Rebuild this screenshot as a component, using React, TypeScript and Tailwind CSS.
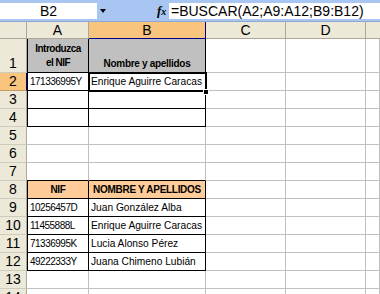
import React from 'react';

type CellProps = {
  w: string;
  text?: string;
  bg?: string;
  bold?: boolean;
  center?: boolean;
  narrow?: boolean;
  right?: 'black' | 'gray';
  bottom?: 'black' | 'gray';
  children?: React.ReactNode;
};

const Cell: React.FC<CellProps> = ({ w, text, bg, bold, center, narrow, right = 'gray', bottom = 'gray', children }) => (
  <div
    className={[
      w,
      'h-full box-border flex items-end pb-[2px] px-[2px] overflow-hidden whitespace-nowrap leading-[13px] text-black',
      right === 'black' ? 'border-r border-r-black' : 'border-r border-r-[#c0c0c0]',
      bottom === 'black' ? 'border-b border-b-black' : 'border-b border-b-[#c0c0c0]',
      bg ?? 'bg-white',
      bold ? 'font-bold text-[10px] tracking-[-0.3px]' : narrow ? 'text-[10px] tracking-[-0.5px]' : 'text-[10.2px]',
      center ? 'justify-center text-center' : '',
    ].join(' ')}
  >
    {children ?? text}
  </div>
);

const RowHead: React.FC<{ n: number; active?: boolean }> = ({ n, active }) => (
  <div
    className={[
      'w-[27px] h-full box-border flex items-end justify-center pb-[1px] text-[14px] leading-[16px] border-r border-b',
      active ? 'bg-[#f8c47e] border-r-[#000080] border-b-[#c49a5c]' : 'bg-[#ece9d8] border-r-[#aca899] border-b-[#cfccbd]',
    ].join(' ')}
  >
    {n}
  </div>
);

const Row: React.FC<{ h: string; children: React.ReactNode }> = ({ h, children }) => (
  <div className={`flex ${h}`}>{children}</div>
);

const data = [
  ['10256457D', 'Juan González Alba'],
  ['11455888L', 'Enrique Aguirre Caracas'],
  ['71336995K', 'Lucia Alonso Pérez'],
  ['49222333Y', 'Juana Chimeno Lubián'],
];

export default function App() {
  return (
    <div className="w-[380px] h-[294px] overflow-hidden bg-white font-['Liberation_Sans',Arial,sans-serif] relative">
      {/* formula bar */}
      <div className="h-[22px] bg-[#a9c5f1] flex items-center border-b border-b-[#8fa8d0] box-border">
        <div className="w-[97px] h-[16px] bg-white flex items-center justify-center text-[14px] leading-none">B2</div>
        <div className="w-[60px] h-full flex items-center pl-[3px]">
          <div className="w-0 h-0 border-l-[3.5px] border-r-[3.5px] border-t-[4px] border-l-transparent border-r-transparent border-t-black" />
        </div>
        <div className="w-[12px] font-['Liberation_Serif',serif] italic font-bold text-[13px] leading-none">
          f<span className="text-[10px]">x</span>
        </div>
        <div className="flex-1 h-[16px] bg-white flex items-center pl-[2px] text-[14px] leading-none whitespace-nowrap overflow-hidden">
          =BUSCAR(A2;A9:A12;B9:B12)
        </div>
      </div>

      {/* column headers */}
      <div className="flex h-[17px] text-[14px] leading-none">
        <div className="w-[27px] h-full box-border bg-[#ece9d8] border-r border-b border-r-[#aca899] border-b-[#aca899]" />
        <div className="w-[62px] h-full box-border bg-[#ece9d8] border-r border-b border-r-[#aca899] border-b-[#aca899] flex items-center justify-center">A</div>
        <div className="w-[117px] h-full box-border bg-[#f8c47e] border-r border-b border-r-[#000080] border-b-[#000080] flex items-center justify-center">B</div>
        <div className="w-[80px] h-full box-border bg-[#ece9d8] border-r border-b border-r-[#aca899] border-b-[#aca899] flex items-center justify-center">C</div>
        <div className="w-[80px] h-full box-border bg-[#ece9d8] border-r border-b border-r-[#aca899] border-b-[#aca899] flex items-center justify-center">D</div>
        <div className="w-[14px] h-full box-border bg-[#ece9d8] border-b border-b-[#aca899]" />
      </div>

      {/* row 1 */}
      <Row h="h-[34px]">
        <RowHead n={1} />
        <Cell w="w-[62px] border-l border-l-black !px-0" bg="bg-[#c0c0c0]" bold center right="black" bottom="black">
          <div className="flex flex-col items-center leading-[14px] tracking-[-0.5px]">
            <span>Introduzca</span>
            <span>el NIF</span>
          </div>
        </Cell>
        <Cell w="w-[117px]" bg="bg-[#c0c0c0]" bold center right="black" bottom="black" text="Nombre y apellidos" />
        <Cell w="w-[80px]" />
        <Cell w="w-[80px]" />
        <Cell w="w-[14px]" />
      </Row>

      {/* row 2 */}
      <Row h="h-[18px]">
        <RowHead n={2} active />
        <Cell w="w-[62px] border-l border-l-black" narrow right="black" bottom="black" text="171336995Y" />
        <Cell w="w-[117px]" right="black" bottom="black" text="Enrique Aguirre Caracas" />
        <Cell w="w-[80px]" />
        <Cell w="w-[80px]" />
        <Cell w="w-[14px]" />
      </Row>

      {[3, 4].map((n) => (
        <Row key={n} h="h-[18px]">
          <RowHead n={n} />
          <Cell w="w-[62px] border-l border-l-black" right="black" bottom="black" />
          <Cell w="w-[117px]" right="black" bottom="black" />
          <Cell w="w-[80px]" />
          <Cell w="w-[80px]" />
          <Cell w="w-[14px]" />
        </Row>
      ))}

      {[5, 6, 7].map((n) => (
        <Row key={n} h="h-[18px]">
          <RowHead n={n} />
          <Cell w="w-[62px]" bottom={n === 7 ? 'black' : 'gray'} />
          <Cell w="w-[117px]" bottom={n === 7 ? 'black' : 'gray'} />
          <Cell w="w-[80px]" />
          <Cell w="w-[80px]" />
          <Cell w="w-[14px]" />
        </Row>
      ))}

      {/* row 8 */}
      <Row h="h-[18px]">
        <RowHead n={8} />
        <Cell w="w-[62px] border-l border-l-black" bg="bg-[#ffcc99]" bold center right="black" bottom="black" text="NIF" />
        <Cell w="w-[117px]" bg="bg-[#ffcc99]" bold center right="black" bottom="black" text="NOMBRE Y APELLIDOS" />
        <Cell w="w-[80px]" />
        <Cell w="w-[80px]" />
        <Cell w="w-[14px]" />
      </Row>

      {data.map(([nif, name], i) => (
        <Row key={nif} h="h-[18px]">
          <RowHead n={9 + i} />
          <Cell w="w-[62px] border-l border-l-black" narrow right="black" bottom="black" text={nif} />
          <Cell w="w-[117px]" right="black" bottom="black" text={name} />
          <Cell w="w-[80px]" />
          <Cell w="w-[80px]" />
          <Cell w="w-[14px]" />
        </Row>
      ))}

      {[13, 14].map((n) => (
        <Row key={n} h="h-[18px]">
          <RowHead n={n} />
          <Cell w="w-[62px]" />
          <Cell w="w-[117px]" />
          <Cell w="w-[80px]" />
          <Cell w="w-[80px]" />
          <Cell w="w-[14px]" />
        </Row>
      ))}

      {/* active cell outline B2 */}
      <div className="absolute left-[88px] top-[72px] w-[119px] h-[20px] border-2 border-black pointer-events-none" />
      <div className="absolute left-[203px] top-[89px] w-[6px] h-[6px] bg-black border border-white pointer-events-none" />
    </div>
  );
}
